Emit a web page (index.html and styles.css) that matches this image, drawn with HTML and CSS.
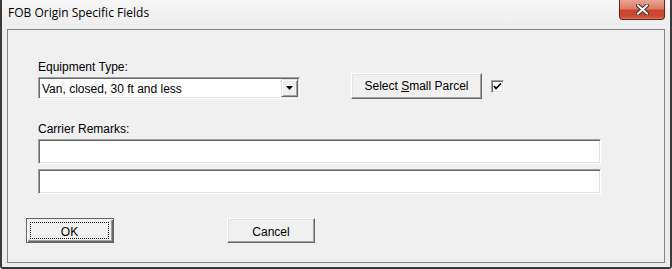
FILE: index.html
```html
<!DOCTYPE html>
<html lang="en">
<head>
  <meta charset="UTF-8">
  <title>FOB Origin Specific Fields</title>
  <link rel="stylesheet" href="styles.css">
</head>
<body>

<div class="window">
  <div class="titlebar">
    <span class="title">FOB Origin Specific Fields</span>
    <div class="close-btn">
      <svg width="13" height="11" viewBox="0 0 13 11">
        <path d="M2 1.5 L11 9.5 M11 1.5 L2 9.5" stroke="#4a2a24" stroke-width="4" stroke-linecap="square"/>
        <path d="M2 1.5 L11 9.5 M11 1.5 L2 9.5" stroke="#ffffff" stroke-width="2" stroke-linecap="square"/>
      </svg>
    </div>
  </div>

  <div class="client">
    <div class="label">Equipment Type:</div>
    <div class="equip-row">
      <div class="combo">
        <span class="combo-text">Van, closed, 30 ft and less</span>
        <span class="combo-btn">
          <svg width="7" height="4" viewBox="0 0 7 4"><path d="M0 0 H7 L3.5 4 Z" fill="#000"/></svg>
        </span>
      </div>
      <button class="btn btn-parcel">Select <u>S</u>mall Parcel</button>
      <span class="check">
        <svg width="13" height="13" viewBox="0 0 13 13">
          <polyline points="3,6 5,8.5 10,3.5" fill="none" stroke="#000" stroke-width="1.7"/>
        </svg>
      </span>
    </div>

    <div class="label label-remarks">Carrier Remarks:</div>
    <div class="field"></div>
    <div class="field field-second"></div>

    <div class="actions">
      <button class="btn btn-default"><span class="focus-rect">OK</span></button>
      <button class="btn btn-cancel">Cancel</button>
    </div>
  </div>
</div>

</body>
</html>
```

FILE: styles.css
```css
* {
  box-sizing: border-box;
}
body {
  margin: 0;
  background: #f0f0f0;
  font-family: "Liberation Sans", Arial, sans-serif;
  font-size: 12px;
  color: #000;
}
.window {
  width: 672px;
  height: 269px;
  background: #ececec;
  border-left: 2px solid #3a3a3a;
  border-right: 2px solid #3a3a3a;
  border-bottom: 2px solid #3a3a3a;
  border-radius: 0 0 3px 3px;
  display: flex;
  flex-direction: column;
}
.titlebar {
  height: 29px;
  display: flex;
  justify-content: space-between;
  align-items: flex-start;
  background: linear-gradient(#f6f6f6, #ededed);
}
.title {
  font-family: "Open Sans", "Noto Sans", sans-serif;
  font-size: 12px;
  line-height: 16px;
  padding: 5px 0 0 6px;
  color: #000;
}
.close-btn {
  width: 46px;
  height: 20px;
  margin-right: 5px;
  border: 1px solid #6e2418;
  border-top: none;
  border-radius: 0 0 4px 4px;
  background: linear-gradient(#e9a595 0%, #dc7d66 45%, #c8462c 55%, #c94a2f 85%, #d8735a 100%);
  display: flex;
  align-items: center;
  justify-content: center;
  padding-bottom: 1px;
}
.client {
  flex: 1;
  margin: 0 5px 4px 5px;
  border: 1px solid #858585;
  background: #f0f0f0;
  padding: 30px 0 0 30px;
}
.label {
  line-height: 14px;
  height: 14px;
}
.equip-row {
  display: flex;
  align-items: flex-start;
  margin-top: -1px;
  height: 26px;
}
.combo {
  width: 262px;
  height: 22px;
  margin-top: 4px;
  background: #fff;
  border: 1px solid;
  border-color: #a0a0a0 #ffffff #ffffff #a0a0a0;
  box-shadow: inset 1px 1px #696969, inset -1px -1px #e3e3e3;
  display: flex;
  padding: 1px;
}
.combo-text {
  flex: 1;
  line-height: 18px;
  padding: 1px 0 0 2px;
}
.combo-btn {
  width: 17px;
  height: 18px;
  background: #f0f0f0;
  border: 1px solid;
  border-color: #e3e3e3 #696969 #696969 #e3e3e3;
  box-shadow: inset 1px 1px #fff, inset -1px -1px #a0a0a0;
  display: flex;
  align-items: center;
  justify-content: center;
}
.btn {
  font-family: "Liberation Sans", Arial, sans-serif;
  font-size: 12px;
  color: #000;
  background: #f0f0f0;
  border: 1px solid;
  border-color: #ffffff #696969 #696969 #ffffff;
  box-shadow: inset -1px -1px #a0a0a0, inset 1px 1px #e3e3e3;
  padding: 0;
  margin: 0;
}
.btn-parcel {
  width: 131px;
  height: 26px;
  margin-left: 51px;
  line-height: 22px;
}
.check {
  width: 13px;
  height: 13px;
  margin: 7px 0 0 9px;
  background: #fff;
  border: 1px solid;
  border-color: #a0a0a0 #ffffff #ffffff #a0a0a0;
  box-shadow: inset 1px 1px #696969, inset -1px -1px #e3e3e3;
  display: flex;
}
.check svg {
  margin: -1px;
}
.label-remarks {
  margin-top: 23px;
}
.field {
  width: 563px;
  height: 25px;
  margin-top: 3px;
  background: #fff;
  border: 1px solid;
  border-color: #a0a0a0 #ffffff #ffffff #a0a0a0;
  box-shadow: inset 1px 1px #696969, inset -1px -1px #e3e3e3;
}
.field-second {
  margin-top: 5px;
}
.actions {
  display: flex;
  margin: 24px 0 0 -12px;
  gap: 113px;
}
.btn-default,
.btn-cancel {
  width: 88px;
  height: 25px;
  padding-top: 2px;
}
.btn-default {
  border-color: #646464;
  box-shadow: inset 1px 1px #fff, inset -1px -1px #696969, inset -2px -2px #a0a0a0;
  padding: 3px 4px 3px 3px;
}
.focus-rect {
  display: block;
  height: 17px;
  line-height: 16px;
  border: 1px dotted #000;
  padding-top: 1px;
}
```
